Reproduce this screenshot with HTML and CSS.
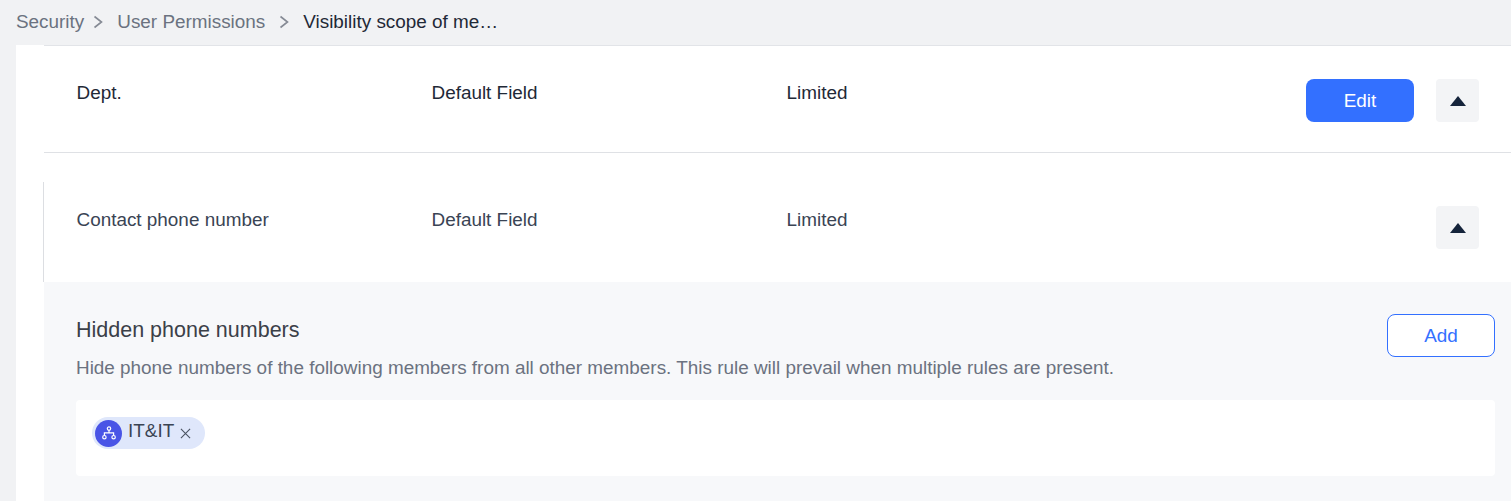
FILE: index.html
```html
<!doctype html>
<html lang="en">
    <head>
        <meta charset="UTF-8" />
        <title>Visibility scope of members</title>
        <link rel="stylesheet" href="styles.css">
    </head>
    <body>
        <nav class="breadcrumb">
            <span class="crumb">Security</span>
            <svg class="crumb-sep" viewBox="0 0 10 14"><path d="M1.5 1.5l7 5.5-7 5.5" /></svg>
            <span class="crumb">User Permissions</span>
            <svg class="crumb-sep crumb-sep-wide" viewBox="0 0 10 14"><path d="M1.5 1.5l7 5.5-7 5.5" /></svg>
            <span class="crumb current">Visibility scope of me…</span>
        </nav>

        <div class="panel">
            <div class="content">
                <div class="row row-dept">
                    <div class="cell">Dept.</div>
                    <div class="cell">Default Field</div>
                    <div class="cell">Limited</div>
                    <div class="actions">
                        <button class="btn-edit">Edit</button>
                        <button class="btn-toggle"><span class="arrow-up"></span></button>
                    </div>
                </div>

                <div class="row-wrap">
                    <div class="row row-phone">
                        <div class="cell cell-muted">Contact phone number</div>
                        <div class="cell cell-muted">Default Field</div>
                        <div class="cell cell-muted">Limited</div>
                        <div class="actions">
                            <button class="btn-toggle"><span class="arrow-up"></span></button>
                        </div>
                    </div>
                </div>

                <section class="details">
                    <div class="details-head">
                        <div>
                            <h2 class="details-title">Hidden phone numbers</h2>
                            <p class="details-desc">Hide phone numbers of the following members from all other members. This rule will prevail when multiple rules are present.</p>
                        </div>
                        <button class="btn-add">Add</button>
                    </div>
                    <div class="members">
                        <span class="chip">
                            <span class="chip-icon">
                                <svg viewBox="0 0 16 16">
                                    <circle cx="8" cy="3.6" r="1.7" />
                                    <circle cx="3.4" cy="12.2" r="1.7" />
                                    <circle cx="12.6" cy="12.2" r="1.7" />
                                    <path d="M8 5.3v2.6M3.4 10.5V7.9h9.2v2.6" />
                                </svg>
                            </span>
                            <span class="chip-label">IT&amp;IT</span>
                            <svg class="chip-close" viewBox="0 0 12 12"><path d="M1 1l10 10M11 1L1 11" /></svg>
                        </span>
                    </div>
                </section>
            </div>
        </div>
    </body>
</html>
```

FILE: styles.css
```css
body {
    margin: 0;
    height: 501px;
    overflow: hidden;
    background-color: #f1f2f4;
    font-family: "Liberation Sans", Arial, sans-serif;
    font-size: 18.9px;
    color: #2b3648;
}
button {
    font-family: inherit;
    font-size: 18.9px;
    padding: 0;
    cursor: pointer;
}
.breadcrumb {
    height: 44px;
    padding-left: 16px;
    padding-bottom: 1px;
    display: flex;
    align-items: center;
    color: #6b7280;
}
.crumb-sep {
    width: 10px;
    height: 14px;
    margin: 0 14px 0 9px;
    fill: none;
    stroke: #858a94;
    stroke-width: 1.6;
}
.crumb-sep-wide {
    margin: 0 14px;
}
.current {
    color: #1f2937;
}
.panel {
    margin-left: 16px;
    height: 456px;
    padding-left: 28px;
    background-color: #fff;
}
.content {
    border-top: 1px solid #e2e4e8;
}
.row {
    display: flex;
    padding-left: 33px;
}
.row-dept {
    height: 73px;
    border-bottom: 1px solid #dfe1e5;
    padding-top: 33px;
}
.row-wrap {
    padding-top: 29px;
}
.row-phone {
    height: 76px;
    margin-left: -1px;
    border-left: 1px solid #dcdee2;
    padding-top: 24px;
}
.cell {
    width: 355px;
    line-height: 28px;
    margin-left: -0.5px;
    margin-right: 0.5px;
    color: #1f2937;
}
.cell-muted {
    color: #3a4454;
}
.actions {
    margin-left: auto;
    margin-right: 32px;
    display: flex;
    gap: 22px;
}
.btn-edit {
    width: 108px;
    height: 43px;
    border: none;
    border-radius: 8px;
    background-color: #3370ff;
    color: #fff;
}
.btn-toggle {
    width: 43px;
    height: 43px;
    border: none;
    border-radius: 4px;
    background-color: #f3f4f6;
    display: flex;
    align-items: center;
    justify-content: center;
}
.arrow-up {
    width: 0;
    height: 0;
    border-left: 8px solid transparent;
    border-right: 8px solid transparent;
    border-bottom: 10px solid #15243b;
}
.details {
    height: 219px;
    box-sizing: border-box;
    padding: 32px 16px 0 32px;
    background-color: #f7f8fa;
}
.details-head {
    display: flex;
    justify-content: space-between;
    align-items: flex-start;
}
.details-title {
    margin: 0;
    font-size: 21.5px;
    font-weight: normal;
    line-height: 32px;
    color: #3b4048;
}
.details-desc {
    margin: 9px 0 0;
    line-height: 26px;
    color: #6b7280;
}
.btn-add {
    width: 108px;
    height: 43px;
    border: 1px solid #3370ff;
    border-radius: 8px;
    background-color: #fff;
    color: #3370ff;
}
.members {
    margin-top: 19px;
    height: 76px;
    box-sizing: border-box;
    padding: 17px 16px;
    background-color: #fff;
    border-radius: 4px;
}
.chip {
    display: inline-flex;
    align-items: center;
    height: 32px;
    padding: 0 14px 0 3px;
    border-radius: 16px;
    background-color: #dfe7fb;
}
.chip-icon {
    width: 27px;
    height: 27px;
    border-radius: 50%;
    background-color: #4954e6;
    display: flex;
    align-items: center;
    justify-content: center;
}
.chip-icon svg {
    width: 16px;
    height: 16px;
    fill: none;
    stroke: #fff;
    stroke-width: 1.2;
}
.chip-label {
    margin-left: 6px;
    position: relative;
    top: -2px;
    color: #3a4454;
}
.chip-close {
    width: 11px;
    height: 11px;
    margin-left: 6px;
    fill: none;
    stroke: #4a5362;
    stroke-width: 1.2;
}
```
